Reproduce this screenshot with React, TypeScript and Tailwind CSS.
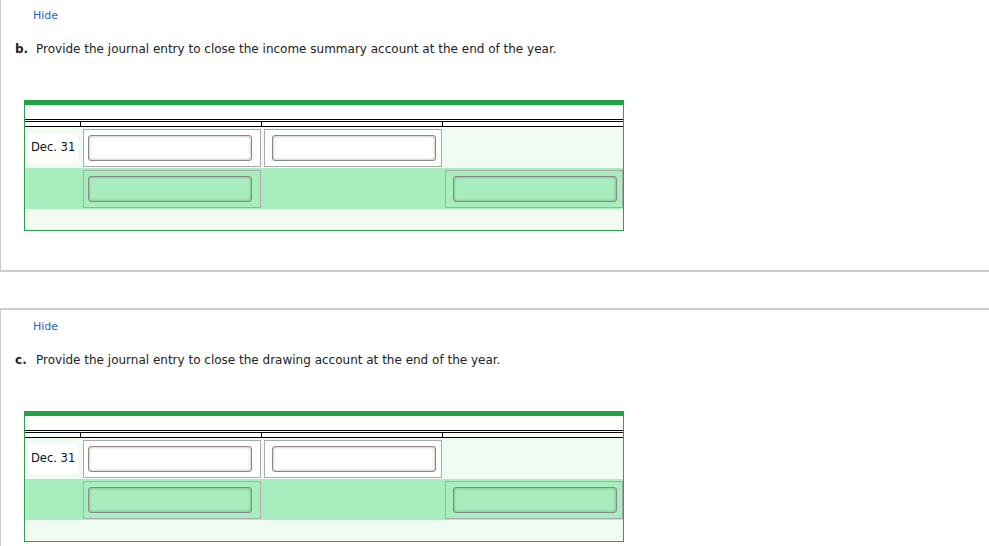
import React from 'react';

const FONT = "font-['Verdana','DejaVu_Sans',sans-serif]";

function Field({ green }: { green?: boolean }) {
  return (
    <div
      className={`h-[26px] w-[164px] rounded-[3px] border border-[#888] shadow-[inset_0_0_3px_rgba(0,0,0,0.35)] ${
        green ? 'bg-[#a8edbd]' : 'bg-white'
      }`}
    />
  );
}

function Box({ green, pl, className }: { green?: boolean; pl: string; className?: string }) {
  return (
    <div
      className={`flex h-[38px] w-[178px] items-center border border-[#aaa] ${pl} ${
        green ? 'bg-[#a8edbd]' : 'bg-white'
      } ${className ?? ''}`}
    >
      <Field green={green} />
    </div>
  );
}

function JournalTable() {
  return (
    <div className="ml-[23px] w-[600px] border-x border-b border-t-[5px] border-x-[#2e9e4f] border-b-[#2e9e4f] border-t-[#21a346] bg-white">
      {/* header */}
      <div className="h-[15px] border-b border-black bg-white" />
      <div className="mt-[1px] grid h-[6px] grid-cols-[55px_181px_181px_1fr] border-y border-black">
        <div />
        <div className="border-l border-black" />
        <div className="border-l border-black" />
        <div className="border-l border-black" />
      </div>

      {/* row 1 */}
      <div className="grid h-[41px] grid-cols-[55px_181px_181px_1fr] items-center bg-[#f0fbf2]">
        <div className="ml-[2px] mt-[1px] flex h-[30px] w-[51px] items-center bg-white pl-[4px] text-[11.5px] text-[#111]">
          Dec. 31
        </div>
        <Box pl="pl-[4px]" className="ml-[3px]" />
        <Box pl="pl-[7px]" className="ml-[3px]" />
        <div />
      </div>

      {/* row 2 */}
      <div className="grid h-[41px] grid-cols-[55px_181px_181px_1fr] items-center bg-[#a8edbd]">
        <div />
        <Box green pl="pl-[4px]" className="ml-[3px]" />
        <div />
        <Box green pl="pl-[7px]" className="ml-[3px]" />
      </div>

      {/* row 3 */}
      <div className="h-[21px] bg-[#f0fbf2]" />
    </div>
  );
}

function Part({ letter, text, first }: { letter: string; text: string; first?: boolean }) {
  return (
    <section
      className={`h-[275px] border-l border-b-2 border-t-2 border-[#ccc] bg-white ${first ? '' : 'mt-[36px]'}`}
    >
      <div className="pl-[32px] pt-[10px] text-[11px] leading-[14px] text-[#2a62c9]">Hide</div>
      <div className="mt-[18px] flex pl-[14px] text-[12px] leading-[16px] text-[#222]">
        <span className="inline-block w-[21px] font-bold">{letter}.</span>
        <span>{text}</span>
      </div>
      <div className="mt-[43px]">
        <JournalTable />
      </div>
    </section>
  );
}

export default function App() {
  return (
    <div className={`h-[546px] overflow-hidden bg-white ${FONT}`}>
      <div className="-mt-[3px]">
        <Part
          first
          letter="b"
          text="Provide the journal entry to close the income summary account at the end of the year."
        />
        <Part letter="c" text="Provide the journal entry to close the drawing account at the end of the year." />
      </div>
    </div>
  );
}
